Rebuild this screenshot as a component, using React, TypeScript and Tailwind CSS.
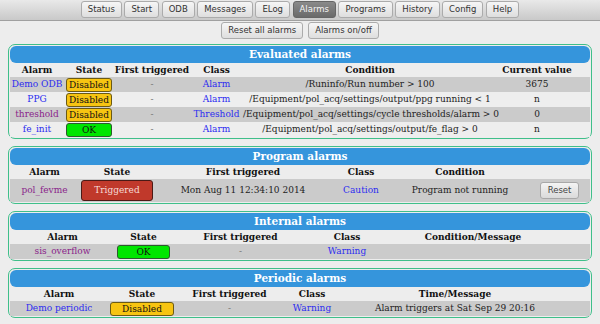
import React from 'react'

const serif = "font-['DejaVu_Serif',serif]"
const sans = "font-['DejaVu_Sans',sans-serif]"

const navItems = ['Status', 'Start', 'ODB', 'Messages', 'ELog', 'Alarms', 'Programs', 'History', 'Config', 'Help']

type Col = { label: string; w: string }

function NavButton({ label, active }: { label: string; active?: boolean }) {
  return (
    <button
      className={
        'h-[17px] px-[6px] rounded-[3px] border text-[8.5px] leading-[15px] ' +
        sans +
        (active
          ? ' border-[#666] bg-gradient-to-b from-[#8a8a8a] to-[#6a6a6a] text-[#f4f4f4]'
          : ' border-[#ababab] bg-gradient-to-b from-[#f6f6f6] to-[#dedede] text-[#333]')
      }
    >
      {label}
    </button>
  )
}

function Badge({ kind, tall }: { kind: 'Disabled' | 'OK' | 'Triggered'; tall?: boolean }) {
  const tone =
    kind === 'Disabled'
      ? 'bg-[#f7c412] border-[#6b5a14] text-[#111]'
      : kind === 'OK'
        ? 'bg-[#00e600] border-[#2d5a2d] text-[#111]'
        : 'bg-[#c0392b] border-[#4a1a16] text-[#f6dcd8]'
  return (
    <div
      className={
        'mx-[2px] rounded-[3px] border text-center ' +
        tone +
        (tall ? ' h-[21px] leading-[19px]' : ' h-[14px] leading-[12px]')
      }
    >
      {kind}
    </div>
  )
}

function Box({ title, cols, children }: { title: string; cols: Col[]; children: React.ReactNode }) {
  return (
    <div className="mx-2 rounded-[7px] border border-[#3fbf8a] p-[1px]">
      <div className={'h-[17px] rounded-[6px] bg-[#3595dc] text-center text-[10.5px] font-bold leading-[17px] text-white ' + serif}>
        {title}
      </div>
      <table className={'w-full table-fixed border-collapse text-[9px] ' + serif}>
        <thead>
          <tr className="h-[14px]">
            {cols.map((c, i) => (
              <th key={i} className={'p-0 text-center font-bold leading-[14px] whitespace-nowrap text-[#111] ' + c.w}>
                {c.label}
              </th>
            ))}
          </tr>
        </thead>
        <tbody>{children}</tbody>
      </table>
    </div>
  )
}

const cellBase = 'p-0 text-center whitespace-nowrap'
const cell = cellBase + ' text-[#222]'
const link = cellBase + ' text-[#2b2bf0]'
const visited = cellBase + ' text-[#8a1f8a]'
const dash = <span className="text-[#777]">-</span>

const evalCols: Col[] = [
  { label: 'Alarm', w: 'w-[54px]' },
  { label: 'State', w: 'w-[50px]' },
  { label: 'First triggered', w: 'w-[76px]' },
  { label: 'Class', w: 'w-[53px]' },
  { label: 'Condition', w: 'w-[254px]' },
  { label: 'Current value', w: 'w-[80px]' },
  { label: '', w: 'w-[13px]' },
]

const evalRows = [
  { name: 'Demo ODB', nameCls: link, cls: 'Alarm', state: 'Disabled' as const, cond: '/Runinfo/Run number > 100', value: '3675' },
  { name: 'PPG', nameCls: link, cls: 'Alarm', state: 'Disabled' as const, cond: '/Equipment/pol_acq/settings/output/ppg running < 1', value: 'n' },
  { name: 'threshold', nameCls: visited, cls: 'Threshold', state: 'Disabled' as const, cond: '/Equipment/pol_acq/settings/cycle thresholds/alarm > 0', value: '0' },
  { name: 'fe_init', nameCls: link, cls: 'Alarm', state: 'OK' as const, cond: '/Equipment/pol_acq/settings/output/fe_flag > 0', value: 'n' },
]

const progCols: Col[] = [
  { label: 'Alarm', w: 'w-[69px]' },
  { label: 'State', w: 'w-[76px]' },
  { label: 'First triggered', w: 'w-[176px]' },
  { label: 'Class', w: 'w-[60px]' },
  { label: 'Condition', w: 'w-[138px]' },
  { label: '', w: 'w-[61px]' },
]

const intCols: Col[] = [
  { label: 'Alarm', w: 'w-[105px]' },
  { label: 'State', w: 'w-[57px]' },
  { label: 'First triggered', w: 'w-[137px]' },
  { label: 'Class', w: 'w-[76px]' },
  { label: 'Condition/Message', w: 'w-[176px]' },
  { label: '', w: 'w-[29px]' },
]

const perCols: Col[] = [
  { label: 'Alarm', w: 'w-[98px]' },
  { label: 'State', w: 'w-[68px]' },
  { label: 'First triggered', w: 'w-[107px]' },
  { label: 'Class', w: 'w-[58px]' },
  { label: 'Time/Message', w: 'w-[228px]' },
  { label: '', w: 'w-[21px]' },
]

export default function App() {
  return (
    <div className="min-h-screen w-[600px] bg-[#ededed]">
      <div className="flex h-[21px] justify-center gap-[2.5px] border-b border-[#a0a0a0] bg-gradient-to-b from-[#e9e9e9] to-[#c9c9c9] pt-[1px]">
        {navItems.map(n => (
          <NavButton key={n} label={n} active={n === 'Alarms'} />
        ))}
      </div>
      <div className="flex justify-center gap-[5px] pt-[1px]">
        <NavButton label="Reset all alarms" />
        <NavButton label="Alarms on/off" />
      </div>

      <div className="mt-[5px] flex flex-col gap-[7px]">
        <Box title="Evaluated alarms" cols={evalCols}>
          {evalRows.map((r, i) => (
            <tr key={r.name} className={'h-[15px] ' + (i % 2 === 0 ? 'bg-[#cbcbcb]' : 'bg-[#eeeeee]')}>
              <td className={r.nameCls}>{r.name}</td>
              <td className={cell}>
                <Badge kind={r.state} />
              </td>
              <td className={cell}>{dash}</td>
              <td className={link}>{r.cls}</td>
              <td className={cell}>{r.cond}</td>
              <td className={cell}>{r.value}</td>
              <td className={cell}></td>
            </tr>
          ))}
        </Box>

        <Box title="Program alarms" cols={progCols}>
          <tr className="h-[23px] bg-[#cbcbcb]">
            <td className={visited}>pol_fevme</td>
            <td className={cell}>
              <Badge kind="Triggered" tall />
            </td>
            <td className={cell}>Mon Aug 11 12:34:10 2014</td>
            <td className={link}>Caution</td>
            <td className={cell}>Program not running</td>
            <td className={cell}>
              <button className={'h-[17px] px-[7px] rounded-[3px] border border-[#a8a8a8] bg-gradient-to-b from-[#f4f4f4] to-[#dadada] text-[8.5px] leading-[15px] text-[#444] ' + sans}>
                Reset
              </button>
            </td>
          </tr>
        </Box>

        <Box title="Internal alarms" cols={intCols}>
          <tr className="h-[15px] bg-[#cbcbcb]">
            <td className={visited}>sis_overflow</td>
            <td className={cell}>
              <Badge kind="OK" />
            </td>
            <td className={cell}>{dash}</td>
            <td className={link}>Warning</td>
            <td className={cell}></td>
            <td className={cell}></td>
          </tr>
        </Box>

        <Box title="Periodic alarms" cols={perCols}>
          <tr className="h-[15px] bg-[#cbcbcb]">
            <td className={link}>Demo periodic</td>
            <td className={cell}>
              <Badge kind="Disabled" />
            </td>
            <td className={cell}>{dash}</td>
            <td className={link}>Warning</td>
            <td className={cell}>Alarm triggers at Sat Sep 29 20:16</td>
            <td className={cell}></td>
          </tr>
        </Box>
      </div>
    </div>
  )
}
